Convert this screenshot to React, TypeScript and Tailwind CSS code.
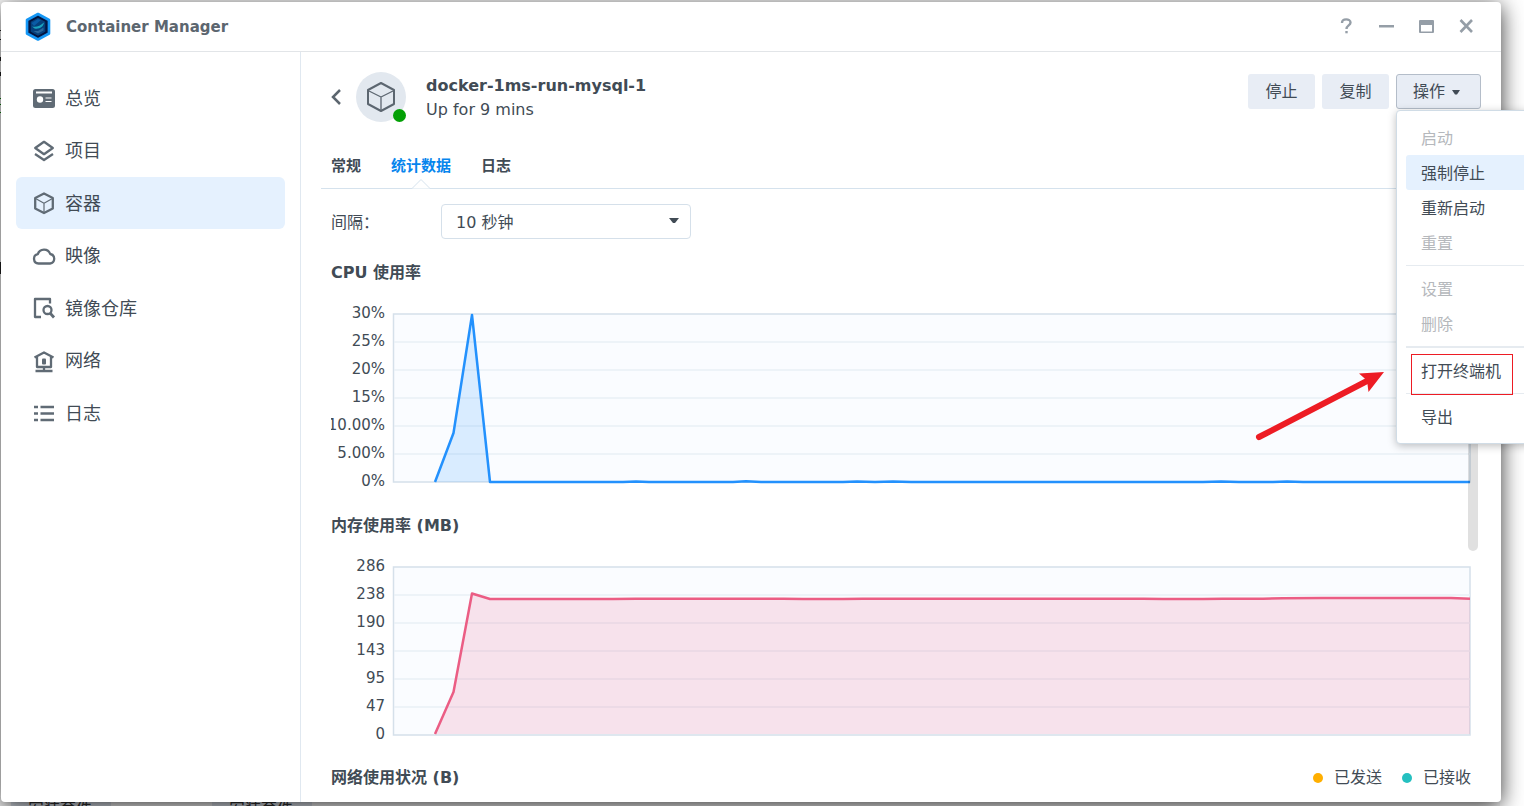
import type { ReactNode } from "react";

const navItems: { label: string; active?: boolean; icon: ReactNode }[] = [
  {
    label: "总览",
    icon: (
      <>
        <rect x="1" y="3" width="22" height="19" rx="2.5" fill="currentColor" stroke="none" />
        <rect x="4" y="5.5" width="16" height="2" fill="#fff" stroke="none" />
        <circle cx="8" cy="13.5" r="3.2" fill="#fff" stroke="none" />
        <path d="M13.5 12h6M13.5 15.5h6" stroke="#fff" strokeWidth="1.2" />
      </>
    ),
  },
  {
    label: "项目",
    icon: (
      <>
        <path d="M12 2.8 20.8 9 12 15.2 3.200 9Z" />
        <path d="M3 15 12 21l9-6" />
      </>
    ),
  },
  {
    label: "容器",
    active: true,
    icon: (
      <>
        <path d="M12 2.500 20.800 7v10.500L12 22l-8.800-4.500V7Z" />
        <path d="m4 7.800 8 4.500 8-4.500M12 12v9.500" strokeWidth="1.200" />
      </>
    ),
  },
  {
    label: "映像",
    icon: <path d="M6.500 19.500a4.700 4.700 0 0 1-.700-9.300 6.500 6.500 0 0 1 12.400-.200 4.800 4.800 0 0 1-.200 9.500Z" />,
  },
  {
    label: "镜像仓库",
    icon: (
      <>
        <path d="M9 21H3V3h15v4.500" />
        <circle cx="15.500" cy="14" r="4" />
        <path d="m18 17 4 4.500" strokeWidth="2.800" />
      </>
    ),
  },
  {
    label: "网络",
    icon: (
      <>
        <path d="M2.500 8.500 12 3.500l9.500 5M5 8v10h14V8M3.500 22h17M12 18v3" />
        <rect x="10" y="9.500" width="4" height="6" rx="1" fill="currentColor" stroke="none" />
      </>
    ),
  },
  {
    label: "日志",
    icon: <path d="M2 6h4M2 12.500h4M2 19h4M8.500 6H22M8.500 12.500H22M8.500 19H22" />,
  },
];

const menuGroups: {
  id: string;
  divider: string;
  items: { label: string; disabled?: boolean; active?: boolean; marked?: boolean }[];
}[] = [
  {
    id: "power",
    divider: "",
    items: [
      { label: "启动", disabled: true },
      { label: "强制停止", active: true },
      { label: "重新启动" },
      { label: "重置", disabled: true },
    ],
  },
  {
    id: "edit",
    divider: "mt-[5px] border-t pt-[5px]",
    items: [
      { label: "设置", disabled: true },
      { label: "删除", disabled: true },
    ],
  },
  { id: "terminal", divider: "mt-[5px] border-t-2 pt-[5px]", items: [{ label: "打开终端机", marked: true }] },
  { id: "export", divider: "mt-[5px] border-t pt-[5px]", items: [{ label: "导出" }] },
];

const tabs = [
  { label: "常规", active: false },
  { label: "统计数据", active: true },
  { label: "日志", active: false },
];

function Logo() {
  return (
    <svg viewBox="0 0 28 30" className="h-[30px] w-7" aria-hidden="true">
      <path d="M14 2 25 8v13.500L14 27.500 3 21.500V8Z" fill="#062052" stroke="#1597f5" strokeWidth="2.600" strokeLinejoin="round" />
      <path d="M14 5 22 9.500v10.500L14 24.500 6 20V9.500Z" fill="#05407c" stroke="#03123b" strokeWidth="1.300" />
      <path d="M7.500 11 14 7l3 1-7 6Z" fill="#0a5ca6" />
      <path d="M8 14.500c4.500 1 8-.500 12-4-.500 4.500-5 7-9.500 6Z" fill="#1ba3bd" />
      <path d="m9.500 19 4.500 2.500 5.500-3v-3l-5.500 3.500Z" fill="#2a669b" />
    </svg>
  );
}

function Cube({ className }: { className: string }) {
  return (
    <svg viewBox="0 0 30 32" className={className} fill="none" stroke="currentColor" strokeWidth="2" strokeLinejoin="round" aria-hidden="true">
      <path d="M15 2 28 9v14l-13 7-13-7V9Z" />
      <path d="m3 10 12 6 12-6M15 16v13" strokeWidth="1.300" />
    </svg>
  );
}

interface ChartProps {
  title: string;
  labels: string[];
  line: string;
  area: string;
  stroke: string;
  fill: string;
}

function Chart({ title, labels, line, area, stroke, fill }: ChartProps) {
  return (
    <section className="pb-3">
      <h2 className="h-6 text-base leading-6 font-bold">{title}</h2>
      <div className="mt-[14px] flex">
        <div className="flex w-[54px] shrink-0 flex-col overflow-hidden text-[15px] leading-7">
          {labels.map((label) => (
            <span key={label} className="flex h-7 justify-end">
              {label}
            </span>
          ))}
        </div>
        <svg viewBox="0 0 1078 170" preserveAspectRatio="none" className="mt-[14px] ml-2 h-[170px] min-w-0 flex-1 overflow-visible" role="img" aria-label={title}>
          <rect x="0.500" y="1" width="1076.500" height="168" fill="#fafcff" stroke="#d5e0ea" strokeWidth="1.500" />
          <path d="M1 29H1077M1 57H1077M1 85H1077M1 113H1077M1 141H1077" stroke="#e9f0f6" strokeWidth="1.500" />
          <path d={area} fill={fill} />
          <path d={line} fill="none" stroke={stroke} strokeWidth="2.500" strokeLinejoin="round" vectorEffect="non-scaling-stroke" />
        </svg>
      </div>
    </section>
  );
}

function Desktop() {
  return (
    <div className="absolute inset-0 flex flex-col justify-end bg-white" aria-hidden="true">
      <svg viewBox="0 0 2 806" className="absolute top-0 left-0 h-[806px] w-0.5">
        <path d="M0 30h2v1H0zM0 39h2v1H0zM0 57h2v4H0zM0 72h2v4H0zM0 262h2v12H0z" fill="#222" />
        <path d="M0 98h2v1H0zM0 104h2v1H0zM0 112h2v1H0z" fill="#0a8a0a" />
      </svg>
      <div className="mr-6 flex h-[9px] gap-[101px] overflow-hidden bg-[#f4f4f4] pl-[11px] text-base leading-6 text-[#333]">
        <span className="w-[100px] bg-[#d9dfe8] pl-[17px]">安装套件</span>
        <span className="w-[100px] bg-[#d9dfe8] pl-[17px]">安装套件</span>
      </div>
    </div>
  );
}

function ActionMenu() {
  return (
    <div role="menu" className="absolute top-full left-0 z-10 mt-px w-40 rounded border border-[#d0dce6] bg-white px-[9px] pt-[9px] pb-[9px] shadow-[0_2px_8px_rgba(0,0,0,0.25)]">
      {menuGroups.map((group) => (
        <div key={group.id} className={`border-[#e6ebf0] ${group.divider}`}>
          {group.items.map((item) => (
            <div key={item.label} className="relative">
              <button
                type="button"
                role="menuitem"
                disabled={item.disabled}
                className={`block h-[35px] w-full rounded-[3px] pt-0.5 pl-[15px] text-left text-base ${item.active ? "bg-[#e5f1fe]" : ""} ${item.disabled ? "text-[#b5b8bc]" : ""}`}
              >
                {item.label}
              </button>
              {item.marked && <span className="absolute top-px left-[5px] h-[41px] w-[102px] border border-[#ed1c24]" />}
            </div>
          ))}
        </div>
      ))}
      <svg viewBox="0 0 130 72" className="pointer-events-none absolute top-[259px] -left-[142px] h-[72px] w-[130px]" aria-hidden="true">
        <path d="M4 67 112 11" stroke="#ed1c24" strokeWidth="6" strokeLinecap="round" />
        <path d="m129 2-25 1.500 8 7 1.500 11.500Z" fill="#ed1c24" />
      </svg>
    </div>
  );
}

export default function App() {
  return (
    <div className="relative h-screen overflow-hidden bg-white pt-0.5 pr-[23px] pb-1 pl-px font-['DejaVu_Sans','Noto_Sans_CJK_SC',sans-serif] text-[#414b55]">
      <Desktop />
      <div className="relative flex h-full flex-col rounded-[4px] bg-white shadow-[0_4px_22px_rgba(0,0,0,0.8)]">
        <header className="flex h-[50px] shrink-0 items-center border-b border-[#e2e5e8] pr-[25px] pl-[23px]">
          <Logo />
          <h1 className="ml-[14px] pt-0.5 text-[15px] font-bold text-[#5c666f]">Container Manager</h1>
          <div className="mb-0.5 ml-auto flex gap-5 text-[#959ea7]">
            <button type="button" aria-label="帮助" className="size-5">
              <svg viewBox="0 0 20 20" fill="none" stroke="currentColor" strokeWidth="2.400">
                <path d="M6 7c0-5 8.500-4.500 8.500-.500 0 3-4 2.800-4 6.500" />
                <path d="M10.500 15v2.300" />
              </svg>
            </button>
            <button type="button" aria-label="最小化" className="size-5">
              <svg viewBox="0 0 20 20">
                <path d="M3 9h15v2.500H3z" fill="currentColor" />
              </svg>
            </button>
            <button type="button" aria-label="最大化" className="size-5">
              <svg viewBox="0 0 20 20">
                <path d="M4 4h13a1 1 0 0 1 1 1v11a1 1 0 0 1-1 1H4a1 1 0 0 1-1-1V5a1 1 0 0 1 1-1ZM5 9v6.500h11V9Z" fill="currentColor" fillRule="evenodd" />
              </svg>
            </button>
            <button type="button" aria-label="关闭" className="size-5">
              <svg viewBox="0 0 20 20">
                <path d="m4.500 4 11.500 12m0-12-11.500 12" stroke="currentColor" strokeWidth="2.600" />
              </svg>
            </button>
          </div>
        </header>

        <div className="flex min-h-0 flex-1">
          <nav className="w-[300px] shrink-0 border-r border-[#e0e8f0] px-[15px] pt-5">
            <ul className="flex h-[367px] flex-col justify-between">
              {navItems.map((item) => (
                <li key={item.label}>
                  <a href="#" className={`flex h-[52px] items-center rounded-md pl-4 text-lg ${item.active ? "bg-[#e5f1fe]" : ""}`}>
                    <svg viewBox="0 0 24 24" className="size-6 text-[#606b75]" fill="none" stroke="currentColor" strokeWidth="2.300" strokeLinejoin="round" aria-hidden="true">
                      {item.icon}
                    </svg>
                    <span className="ml-[9px] pt-px">{item.label}</span>
                  </a>
                </li>
              ))}
            </ul>
          </nav>

          <main className="flex min-w-0 flex-1 flex-col pr-5 pl-5">
            <div className="flex h-[90px] shrink-0 items-center">
              <button type="button" aria-label="返回" className="ml-[9px] h-5 w-3">
                <svg viewBox="0 0 12 20" fill="none" stroke="#5c666f" strokeWidth="2.500">
                  <path d="m10 3-7 7 7 7" />
                </svg>
              </button>
              <div className="relative ml-[14px] flex size-[50px] items-center justify-center rounded-full bg-[#e2e8ef] text-[#5c6670]">
                <Cube className="h-8 w-[30px]" />
                <span className="absolute right-0 bottom-0 size-[13px] rounded-full bg-[#03a005]" />
              </div>
              <div className="ml-5 pt-0.5">
                <h2 className="text-base leading-6 font-bold">docker-1ms-run-mysql-1</h2>
                <p className="text-base leading-6">Up for 9 mins</p>
              </div>
              <div className="mb-[11px] ml-auto flex gap-[7px] text-base">
                <button type="button" className="h-[35px] w-[67px] rounded-[3px] bg-[#e8edf5]">停止</button>
                <button type="button" className="h-[35px] w-[67px] rounded-[3px] bg-[#e8edf5]">复制</button>
                <div className="relative">
                  <button type="button" aria-haspopup="menu" aria-expanded="true" className="flex h-[35px] w-[85px] items-center gap-[7px] rounded-[3px] border border-[#b4bdc9] bg-[#e8edf5] pl-4">
                    操作
                    <svg viewBox="0 0 8 5" className="mt-0.5 h-[5px] w-2" aria-hidden="true">
                      <path d="M0 0h8L5 4.500H3Z" fill="#414b55" />
                    </svg>
                  </button>
                  <ActionMenu />
                </div>
              </div>
            </div>

            <div role="tablist" className="flex h-[47px] shrink-0 gap-[30px] border-b border-[#d5e2ed] pl-[10px] text-[15px] font-bold">
              {tabs.map((tab) => (
                <button key={tab.label} type="button" role="tab" aria-selected={tab.active} className={`relative pt-0.5 ${tab.active ? "text-[#0685ed]" : ""}`}>
                  {tab.label}
                  {tab.active && (
                    <svg viewBox="0 0 18 10" className="absolute -bottom-px left-1/2 h-[10px] w-[18px] -translate-x-1/2" aria-hidden="true">
                      <path d="m0 9.500 9-9 9 9" fill="#fff" stroke="#d5e2ed" />
                    </svg>
                  )}
                </button>
              ))}
            </div>

            <div className="relative min-h-0 flex-1 overflow-hidden pr-[10px] pl-[10px]">
              <div className="mt-[15px] flex h-[35px] items-center text-base">
                <label htmlFor="interval" className="w-[110px] pt-0.5">间隔：</label>
                <div className="relative">
                  <select id="interval" className="h-[35px] w-[250px] appearance-none rounded border border-[#d5e0ea] bg-white pt-0.5 pl-[14px]">
                    <option>10 秒钟</option>
                  </select>
                  <svg viewBox="0 0 10 6" className="pointer-events-none absolute top-[14px] right-3 h-[6px] w-[10px]" aria-hidden="true">
                    <path d="M0 0h10L6 5H4Z" fill="#414b55" />
                  </svg>
                </div>
              </div>
              <div className="mt-[22px] flex flex-col gap-[7px]">
                <Chart
                  title="CPU 使用率"
                  labels={["30%", "25%", "20%", "15%", "10.00%", "5.00%", "0%"]}
                  line="M42 169 60.500 120 79 2 97 169H230L243 168.500 256 169H340L353 168.300 368 169H450L464 168.400 482 169 500 168.400 518 169H810L828 168.400 846 169H880L894 168.400 910 169H1077"
                  area="M42 169 60.500 120 79 2 97 169Z"
                  stroke="#2391fd"
                  fill="rgba(35,145,253,0.15)"
                />
                <Chart
                  title="内存使用率 (MB)"
                  labels={["286", "238", "190", "143", "95", "47", "0"]}
                  line="M42 168 60.500 126 79 27.500 97 33H220L243 32.700H390L410 33H450L470 32.700H750L770 33H810L830 32.700H870L890 32.200 930 32H1058L1077 32.700"
                  area="M42 168 60.500 126 79 27.500 97 33H220L243 32.700H1077V168Z"
                  stroke="#eb5d84"
                  fill="rgba(236,70,120,0.14)"
                />
              </div>
              <div className="mt-[6px] flex items-center text-base leading-6">
                <h2 className="font-bold">网络使用状况 (B)</h2>
                <span className="ml-auto size-[10px] rounded-full bg-[#ffaf00]" />
                <span className="ml-[11px]">已发送</span>
                <span className="ml-5 size-[10px] rounded-full bg-[#25c0c0]" />
                <span className="ml-[11px]">已接收</span>
              </div>
              <div className="absolute top-10 right-[3px] h-[322px] w-[10px] rounded-full bg-black/12" />
            </div>
          </main>
        </div>
      </div>
    </div>
  );
}
